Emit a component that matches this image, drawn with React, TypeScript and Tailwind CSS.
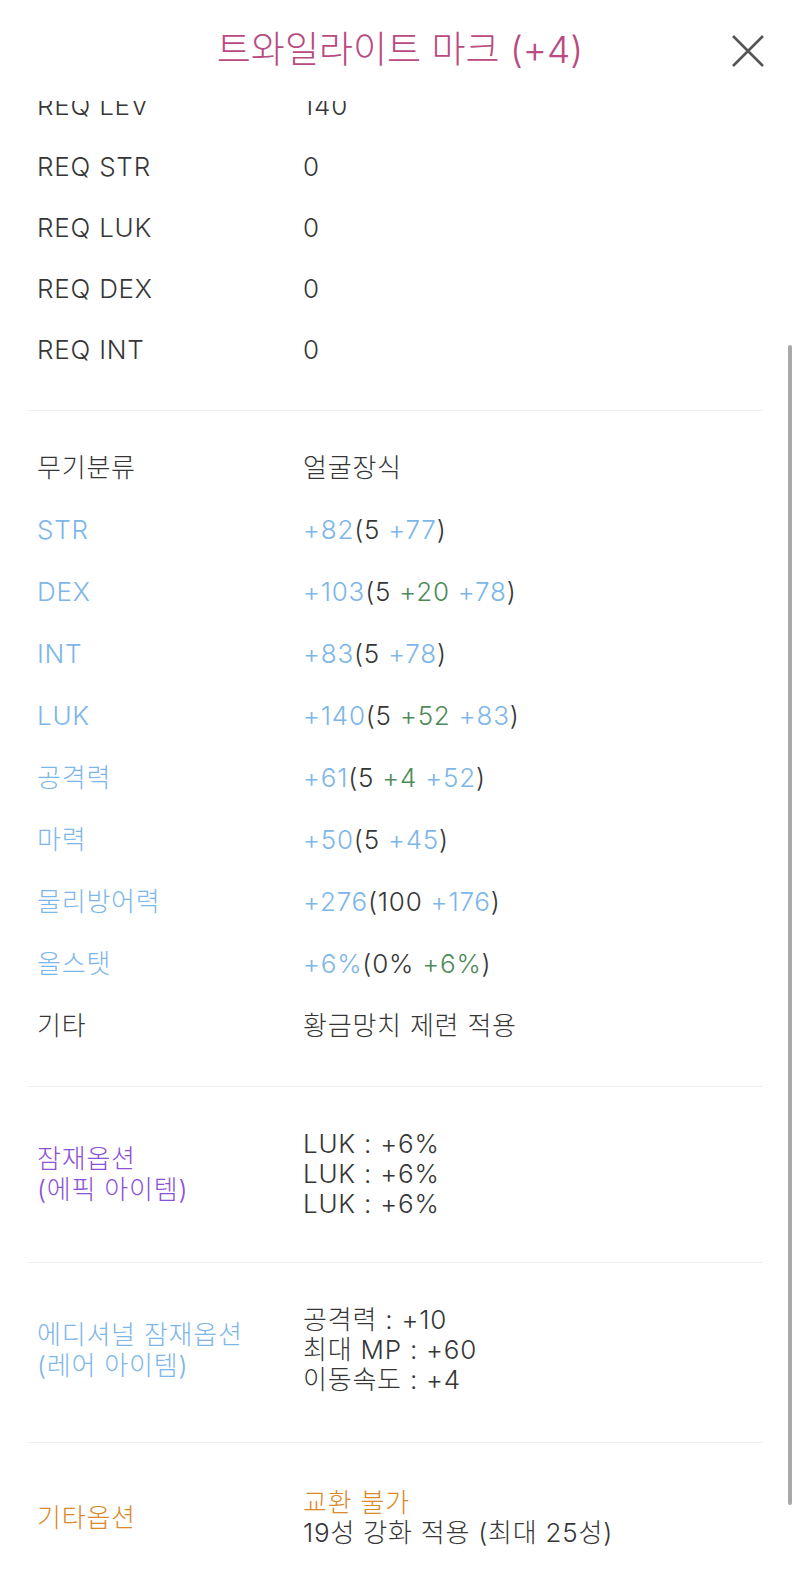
import React from "react";

const BLUE = "text-[#7db6e8]";
const GREEN = "text-[#4d8b58]";

type Part = { t: string; c?: "b" | "g" };

function Value({ parts }: { parts: Part[] }) {
  return (
    <span>
      {parts.map((p, i) => (
        <span key={i} className={p.c === "b" ? BLUE : p.c === "g" ? GREEN : ""}>
          {p.t}
        </span>
      ))}
    </span>
  );
}

function Row({ label, blue, tall, children }: { label: string; blue?: boolean; tall?: boolean; children: React.ReactNode }) {
  return (
    <div className={`flex items-center ${tall ? "h-[62px]" : "h-[61px]"}`}>
      <div className={`w-[275px] pl-[9px] ${blue ? BLUE : ""}`}>{label}</div>
      <div>{children}</div>
    </div>
  );
}

const reqRows = [
  ["REQ LEV", "140"],
  ["REQ STR", "0"],
  ["REQ LUK", "0"],
  ["REQ DEX", "0"],
  ["REQ INT", "0"],
];

const statRows: { label: string; parts: Part[] }[] = [
  { label: "STR", parts: [{ t: "+82", c: "b" }, { t: "(5 " }, { t: "+77", c: "b" }, { t: ")" }] },
  { label: "DEX", parts: [{ t: "+103", c: "b" }, { t: "(5 " }, { t: "+20", c: "g" }, { t: " " }, { t: "+78", c: "b" }, { t: ")" }] },
  { label: "INT", parts: [{ t: "+83", c: "b" }, { t: "(5 " }, { t: "+78", c: "b" }, { t: ")" }] },
  { label: "LUK", parts: [{ t: "+140", c: "b" }, { t: "(5 " }, { t: "+52", c: "g" }, { t: " " }, { t: "+83", c: "b" }, { t: ")" }] },
  { label: "공격력", parts: [{ t: "+61", c: "b" }, { t: "(5 " }, { t: "+4", c: "g" }, { t: " " }, { t: "+52", c: "b" }, { t: ")" }] },
  { label: "마력", parts: [{ t: "+50", c: "b" }, { t: "(5 " }, { t: "+45", c: "b" }, { t: ")" }] },
  { label: "물리방어력", parts: [{ t: "+276", c: "b" }, { t: "(100 " }, { t: "+176", c: "b" }, { t: ")" }] },
  { label: "올스탯", parts: [{ t: "+6%", c: "b" }, { t: "(0% " }, { t: "+6%", c: "g" }, { t: ")" }] },
];

export default function App() {
  return (
    <div
      className="relative w-[800px] h-[1584px] overflow-hidden bg-white text-[#363636] text-[26px] font-light tracking-[0.03em]"
      style={{ fontFamily: 'Inter, "Noto Sans CJK KR", sans-serif' }}
    >
      <header className="relative z-10 flex h-[101px] items-center justify-center bg-white pb-[2px]">
        <h1 className="text-[37px] font-light tracking-normal text-[#b94a82]">트와일라이트 마크 (+4)</h1>
        <button className="absolute right-[35px] top-[34px] h-[34px] w-[34px]">
          <svg viewBox="0 0 34 34" className="h-full w-full" fill="none" stroke="#555" strokeWidth="2.6">
            <path d="M2 2 L32 32 M32 2 L2 32" />
          </svg>
        </button>
      </header>

      <div className="-mt-[26px]">
        <section className="ml-[28px] mr-[37px] border-b border-[#eeeeee] pb-[30px]">
          {reqRows.map(([l, v]) => (
            <Row key={l} label={l}>
              {v}
            </Row>
          ))}
        </section>

        <section className="ml-[28px] mr-[37px] border-b border-[#eeeeee] pt-[25px] pb-[30px]">
          <Row label="무기분류" tall>얼굴장식</Row>
          {statRows.map((r) => (
            <Row key={r.label} label={r.label} blue tall>
              <Value parts={r.parts} />
            </Row>
          ))}
          <Row label="기타" tall>황금망치 제련 적용</Row>
        </section>

        <section className="ml-[28px] mr-[37px] flex items-center border-b border-[#eeeeee] pt-[42px] pb-[43px] leading-[30px]">
          <div className="w-[275px] pl-[9px] leading-[31px] text-[#8a52d6]">
            잠재옵션
            <br />
            (에픽 아이템)
          </div>
          <div>
            <div>LUK : +6%</div>
            <div>LUK : +6%</div>
            <div>LUK : +6%</div>
          </div>
        </section>

        <section className="ml-[28px] mr-[37px] flex items-center border-b border-[#eeeeee] pt-[42px] pb-[47px] leading-[30px]">
          <div className="w-[275px] pl-[9px] leading-[31px] text-[#7db6e8]">
            에디셔널 잠재옵션
            <br />
            (레어 아이템)
          </div>
          <div>
            <div>공격력 : +10</div>
            <div>최대 MP : +60</div>
            <div>이동속도 : +4</div>
          </div>
        </section>

        <section className="ml-[28px] mr-[37px] flex items-center pt-[45px] pb-[43px] leading-[30px]">
          <div className="w-[275px] pl-[9px] text-[#d98a2b]">기타옵션</div>
          <div>
            <div className="text-[#d98a2b]">교환 불가</div>
            <div>19성 강화 적용 (최대 25성)</div>
          </div>
        </section>
      </div>

      <div className="absolute left-[788px] top-[345px] h-[1160px] w-[4px] rounded-full bg-[#a9a9a9]" />
    </div>
  );
}
